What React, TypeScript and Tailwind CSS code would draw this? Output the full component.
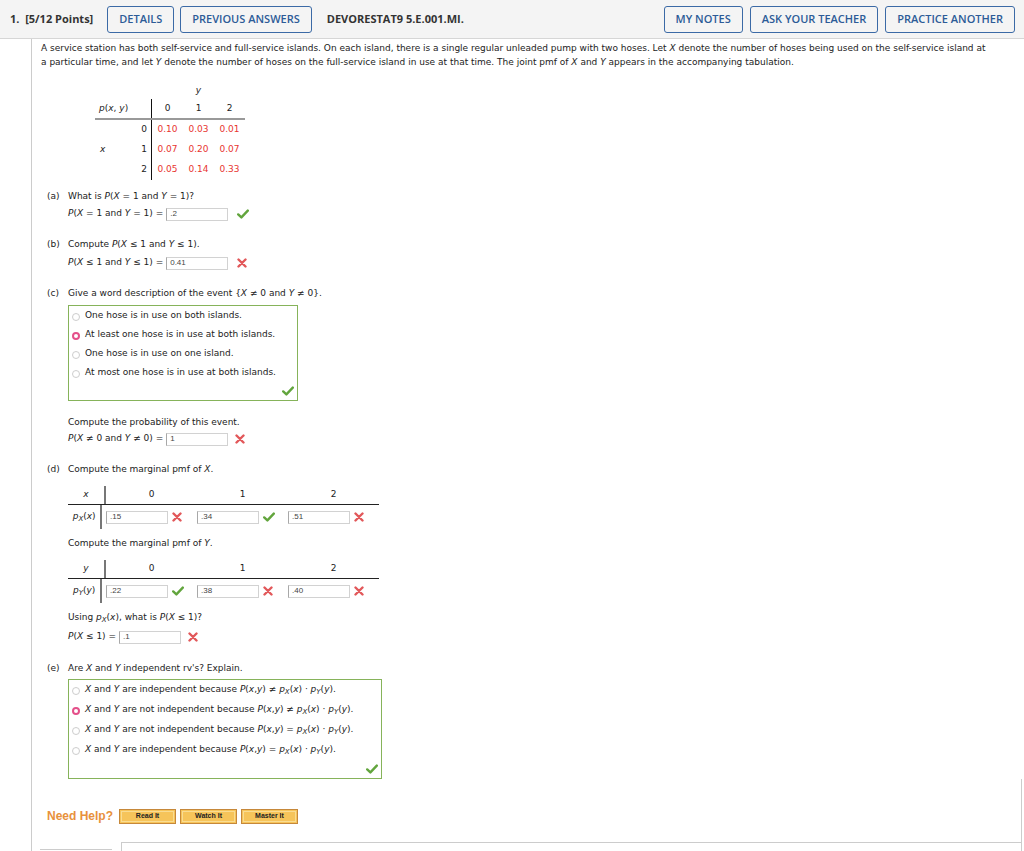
import type { ReactNode } from "react";

const BLUE_BTN =
  "h-[27px] px-[11px] rounded-[3px] border border-[#3b6aa6] text-[#2c5b97] text-[11px] font-semibold bg-[#f4f4f4] flex items-center";

function Check() {
  return (
    <svg width="12" height="10" viewBox="0 0 12 10" className="shrink-0">
      <path d="M1.2 5.4 L4.4 8.4 L10.8 1.6" fill="none" stroke="#62a53d" strokeWidth="2.4" strokeLinecap="round" strokeLinejoin="round" />
    </svg>
  );
}

function Cross() {
  return (
    <svg width="10" height="10" viewBox="0 0 10 10" className="shrink-0">
      <path d="M1.5 1.5 L8.5 8.5 M8.5 1.5 L1.5 8.5" stroke="#e2585a" strokeWidth="2.4" strokeLinecap="round" />
    </svg>
  );
}

function Box({ value, w = 62 }: { value: string; w?: number }) {
  return (
    <div
      className="h-[13px] border border-[#d2d2d2] border-l-[#a8a8a8] pl-[3px] flex items-center text-[8px] text-[#444] font-['Liberation_Sans',Arial,sans-serif] shrink-0"
      style={{ width: w }}
    >
      {value}
    </div>
  );
}

function Answer({ label, value, ok, gap = 5 }: { label: ReactNode; value: string; ok: boolean; gap?: number }) {
  return (
    <div className="flex items-center h-[16px] gap-[3px]">
      <span>{label}</span>
      <Box value={value} />
      <span style={{ marginLeft: gap }}>{ok ? <Check /> : <Cross />}</span>
    </div>
  );
}

function Radio({ on }: { on?: boolean }) {
  return on ? (
    <span className="w-[8px] h-[8px] rounded-full border-[2px] border-[#e4508a] bg-white shrink-0 mt-[5px]" />
  ) : (
    <span className="w-[8px] h-[8px] rounded-full border border-[#cdcdcd] bg-white shrink-0 mt-[5px]" />
  );
}

function Px({ v }: { v: "X" | "Y" }) {
  const l = v === "X" ? "x" : "y";
  return (
    <span>
      <i>p</i>
      <sub className="text-[7px] relative top-[2px] align-baseline">
        <i>{v}</i>
      </sub>
      (<i>{l}</i>)
    </span>
  );
}

function Part({ tag, children }: { tag: string; children: ReactNode }) {
  return (
    <div className="flex h-[14px] items-center">
      <span className="w-[27px] pl-[6px]">{tag}</span>
      <span>{children}</span>
    </div>
  );
}

function ChoiceBox({ items, picked, w, rowH, padT, mt }: { items: ReactNode[]; picked: number; w: number; rowH: number; padT: number; mt: number }) {
  return (
    <div className="ml-[27px] border border-[#86b35a]" style={{ width: w, marginTop: mt }}>
      {items.map((t, i) => (
        <div key={i} className="flex gap-[5px] pl-[3px] items-start" style={{ height: rowH, paddingTop: padT }}>
          <Radio on={i === picked} />
          <span className="leading-[14px]">{t}</span>
        </div>
      ))}
      <div className="h-[18px] flex justify-end items-center pr-[3px]">
        <Check />
      </div>
    </div>
  );
}

function Marginal({ v, vals }: { v: "X" | "Y"; vals: [string, boolean][] }) {
  return (
    <div className="ml-[27px] w-[311px]">
      <div className="flex h-[19px] border-b border-[#222]">
        <div className="w-[36px] text-center italic flex items-center justify-center">{v === "X" ? "x" : "y"}</div>
        <div className="w-[2px] bg-[#777]" />
        {["0", "1", "2"].map((h) => (
          <div key={h} className="w-[91px] flex items-center justify-center">{h}</div>
        ))}
      </div>
      <div className="flex h-[24px]">
        <div className="w-[36px] flex items-center justify-center">
          <Px v={v} />
        </div>
        <div className="w-[2px] bg-[#777]" />
        <div className="flex items-center pl-[4px]">
          {vals.map(([val, ok], i) => (
            <div key={i} className="w-[91px] flex items-center gap-[4px]">
              <Box value={val} />
              {ok ? <Check /> : <Cross />}
            </div>
          ))}
        </div>
      </div>
    </div>
  );
}

function Yellow({ children }: { children: string }) {
  return (
    <div className="w-[57px] h-[15px] border border-[#c6883a] bg-[#f6c45a] p-[1px] flex">
      <div className="flex-1 border border-[#f9dc92] flex items-center justify-center text-[7px] font-bold text-[#222]">
        {children}
      </div>
    </div>
  );
}

export default function App() {
  const joint = [
    ["0", ["0.10", "0.03", "0.01"]],
    ["1", ["0.07", "0.20", "0.07"]],
    ["2", ["0.05", "0.14", "0.33"]],
  ] as const;

  return (
    <div className="w-[1024px] h-[851px] overflow-hidden bg-white flex flex-col text-[#222]">
      {/* header */}
      <div className="h-[39px] shrink-0 bg-[#f4f4f4] border-b border-[#d6d6d6] flex items-center pl-[10px] pr-[9px] font-['Open_Sans',sans-serif] text-[#333]">
        <span className="text-[11px] font-bold">1.&nbsp; [5/12 Points]</span>
        <button className={BLUE_BTN + " ml-[14px]"}>DETAILS</button>
        <button className={BLUE_BTN + " ml-[6px]"}>PREVIOUS ANSWERS</button>
        <span className="ml-[15px] text-[11px] font-bold">DEVORESTAT9 5.E.001.MI.</span>
        <div className="ml-auto flex gap-[7px]">
          <button className={BLUE_BTN}>MY NOTES</button>
          <button className={BLUE_BTN}>ASK YOUR TEACHER</button>
          <button className={BLUE_BTN}>PRACTICE ANOTHER</button>
        </div>
      </div>

      {/* body */}
      <div className="flex-1 ml-[31px] border-l border-[#cccccc] flex flex-col font-['DejaVu_Sans',Verdana,sans-serif] text-[9px]">
        <div className="pl-[9px] pt-[2px]">
          <div className="leading-[14px]">
            <div className="whitespace-nowrap">
              A service station has both self-service and full-service islands. On each island, there is a single regular unleaded pump with two hoses. Let <i>X</i> denote the number of hoses being used on the self-service island at
            </div>
            <div className="whitespace-nowrap">
              a particular time, and let <i>Y</i> denote the number of hoses on the full-service island in use at that time. The joint pmf of <i>X</i> and <i>Y</i> appears in the accompanying tabulation.
            </div>
          </div>

          {/* joint pmf table */}
          <div className="ml-[54px] mt-[14px] w-[150px]">
            <div className="flex h-[16px] items-center">
              <div className="w-[57px]" />
              <div className="w-[93px] text-center italic">y</div>
            </div>
            <div className="flex h-[21px] border-b-2 border-[#999]">
              <div className="w-[57px] border-r border-[#111] flex items-center pl-[4px]">
                <i>p</i>(<i>x</i>,&nbsp;<i>y</i>)
              </div>
              {["0", "1", "2"].map((h) => (
                <div key={h} className="w-[31px] flex items-center justify-center">{h}</div>
              ))}
            </div>
            {joint.map(([r, vals]) => (
              <div key={r} className="flex h-[20px]">
                <div className="w-[57px] border-r border-[#111] flex items-center justify-between pl-[5px] pr-[4px]">
                  <i>{r === "1" ? "x" : ""}</i>
                  <span>{r}</span>
                </div>
                {vals.map((v, i) => (
                  <div key={i} className="w-[31px] flex items-center justify-center text-[#e8352f]">{v}</div>
                ))}
              </div>
            ))}
          </div>

          {/* (a) */}
          <div className="mt-[10px]">
            <Part tag="(a)">
              What is <i>P</i>(<i>X</i> = 1 and <i>Y</i> = 1)?
            </Part>
          </div>
          <div className="ml-[27px] mt-[2px]">
            <Answer label={<><i>P</i>(<i>X</i> = 1 and <i>Y</i> = 1) =</>} value=".2" ok={true} gap={6} />
          </div>

          {/* (b) */}
          <div className="mt-[16px]">
            <Part tag="(b)">
              Compute <i>P</i>(<i>X</i> ≤ 1 and <i>Y</i> ≤ 1).
            </Part>
          </div>
          <div className="ml-[27px] mt-[3px]">
            <Answer label={<><i>P</i>(<i>X</i> ≤ 1 and <i>Y</i> ≤ 1) =</>} value="0.41" ok={false} gap={6} />
          </div>

          {/* (c) */}
          <div className="mt-[16px]">
            <Part tag="(c)">
              Give a word description of the event {"{"}<i>X</i> ≠ 0 and <i>Y</i> ≠ 0{"}"}.
            </Part>
          </div>
          <ChoiceBox
            w={230}
            picked={1}
            rowH={19}
            padT={2}
            mt={4}
            items={[
              "One hose is in use on both islands.",
              "At least one hose is in use at both islands.",
              "One hose is in use on one island.",
              "At most one hose is in use at both islands.",
            ]}
          />
          <div className="ml-[27px] mt-[14px] leading-[14px]">Compute the probability of this event.</div>
          <div className="ml-[27px] mt-[2px]">
            <Answer label={<><i>P</i>(<i>X</i> ≠ 0 and <i>Y</i> ≠ 0) =</>} value="1" ok={false} gap={4} />
          </div>

          {/* (d) */}
          <div className="mt-[16px]">
            <Part tag="(d)">
              Compute the marginal pmf of <i>X</i>.
            </Part>
          </div>
          <div className="mt-[9px]">
            <Marginal v="X" vals={[[".15", false], [".34", true], [".51", false]]} />
          </div>
          <div className="ml-[27px] mt-[7px] leading-[14px]">
            Compute the marginal pmf of <i>Y</i>.
          </div>
          <div className="mt-[10px]">
            <Marginal v="Y" vals={[[".22", true], [".38", false], [".40", false]]} />
          </div>
          <div className="ml-[27px] mt-[7px] leading-[14px]">
            Using <Px v="X" />, what is <i>P</i>(<i>X</i> ≤ 1)?
          </div>
          <div className="ml-[27px] mt-[5px]">
            <Answer label={<><i>P</i>(<i>X</i> ≤ 1) =</>} value=".1" ok={false} gap={4} />
          </div>

          {/* (e) */}
          <div className="mt-[17px]">
            <Part tag="(e)">
              Are <i>X</i> and <i>Y</i> independent rv's? Explain.
            </Part>
          </div>
          <ChoiceBox
            w={314}
            picked={1}
            rowH={20}
            padT={2}
            mt={3}
            items={[
              <><i>X</i> and <i>Y</i> are independent because <i>P</i>(<i>x</i>,<i>y</i>) ≠ <Px v="X" /> · <Px v="Y" />.</>,
              <><i>X</i> and <i>Y</i> are not independent because <i>P</i>(<i>x</i>,<i>y</i>) ≠ <Px v="X" /> · <Px v="Y" />.</>,
              <><i>X</i> and <i>Y</i> are not independent because <i>P</i>(<i>x</i>,<i>y</i>) = <Px v="X" /> · <Px v="Y" />.</>,
              <><i>X</i> and <i>Y</i> are independent because <i>P</i>(<i>x</i>,<i>y</i>) = <Px v="X" /> · <Px v="Y" />.</>,
            ]}
          />
        </div>

        {/* need help */}
        <div className="mr-[2px] border-r border-[#cccccc] pt-[29px] pb-[18px] pl-[15px]">
          <div className="flex items-center h-[16px] gap-[4px] font-['Liberation_Sans',Arial,sans-serif]">
            <span className="text-[12px] font-bold text-[#e8913c] mr-[2px]">Need Help?</span>
            <Yellow>Read It</Yellow>
            <Yellow>Watch It</Yellow>
            <Yellow>Master It</Yellow>
          </div>
        </div>
        <div className="flex flex-1 mr-[2px]">
          <div className="ml-[8px] w-[72px] h-[8px] border-b border-[#cccccc]" />
          <div className="ml-[9px] flex-1 border-t border-l border-r border-[#cccccc]" />
        </div>
      </div>
    </div>
  );
}
